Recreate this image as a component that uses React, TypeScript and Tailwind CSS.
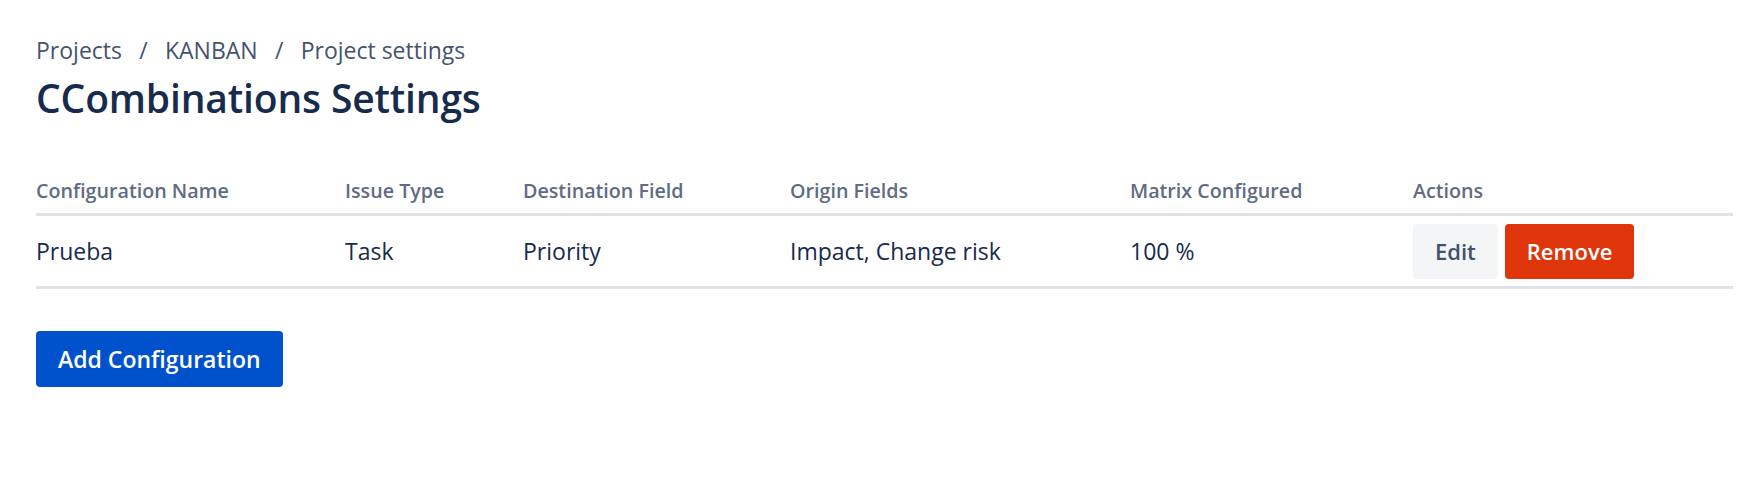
import React from "react";

const columns = [
  "Configuration Name",
  "Issue Type",
  "Destination Field",
  "Origin Fields",
  "Matrix Configured",
  "Actions",
];

const rows = [
  {
    name: "Prueba",
    issueType: "Task",
    destination: "Priority",
    origins: "Impact, Change risk",
    matrix: "100 %",
  },
];

const grid = "grid grid-cols-[309px_178px_267px_340px_283px_1fr]";

export default function App() {
  return (
    <div
      className="min-h-screen bg-white pl-[36px] pr-[13px] pt-[34px]"
      style={{ fontFamily: '"Open Sans", "Noto Sans", sans-serif' }}
    >
      {/* Breadcrumbs */}
      <nav className="flex items-center text-[23px] leading-[32px] text-[#44546f]">
        <span>Projects</span>
        <span className="w-[43px] text-center">/</span>
        <span>KANBAN</span>
        <span className="w-[43px] text-center">/</span>
        <span>Project settings</span>
      </nav>

      <h1 className="mt-[8px] text-[39px] font-semibold leading-[48px] tracking-[-0.15px] text-[#172b4d]">
        CCombinations Settings
      </h1>

      {/* Table */}
      <div className="mt-[55px]">
        <div className={`${grid} border-b-[3px] border-[#dfe1e6] pb-[8px]`}>
          {columns.map((c) => (
            <div key={c} className="text-[19.7px] font-semibold leading-[28px] text-[#5e6c84]">
              {c}
            </div>
          ))}
        </div>
        {rows.map((r) => (
          <div
            key={r.name}
            className={`${grid} h-[73px] items-center border-b-[3px] border-[#dfe1e6] text-[23px] text-[#172b4d]`}
          >
            <div>{r.name}</div>
            <div>{r.issueType}</div>
            <div>{r.destination}</div>
            <div>{r.origins}</div>
            <div>{r.matrix}</div>
            <div className="flex gap-[7px]">
              <button className="h-[55px] rounded-[4px] bg-[#f4f5f7] px-[22px] text-[22px] font-semibold text-[#42526e]">
                Edit
              </button>
              <button className="h-[55px] rounded-[4px] bg-[#de350b] px-[22px] text-[22px] font-semibold text-white">
                Remove
              </button>
            </div>
          </div>
        ))}
      </div>

      <button className="mt-[42px] h-[56px] rounded-[4px] bg-[#0052cc] px-[22px] text-[23px] font-semibold text-white">
        Add Configuration
      </button>
    </div>
  );
}
